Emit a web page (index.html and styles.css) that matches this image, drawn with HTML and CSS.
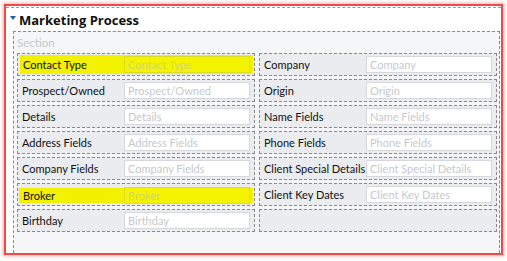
FILE: index.html
```html
<html>
  <head>
    <link rel="stylesheet" href="styles.css">
    <title>Marketing Process</title>
  </head>
  <body>
    <div class="frame">
      <div class="form">
        <h1 class="title"><span class="caret"></span>Marketing Process</h1>
        <div class="section">
          <div class="section-label">Section</div>
          <div class="grid">
            <div class="cell"><div class="field mark"><label>Contact Type</label><input placeholder="Contact Type"></div></div>
            <div class="cell"><div class="field"><label>Company</label><input placeholder="Company"></div></div>

            <div class="cell"><div class="field"><label>Prospect/Owned</label><input placeholder="Prospect/Owned"></div></div>
            <div class="cell"><div class="field"><label>Origin</label><input placeholder="Origin"></div></div>

            <div class="cell"><div class="field"><label>Details</label><input placeholder="Details"></div></div>
            <div class="cell"><div class="field"><label>Name Fields</label><input placeholder="Name Fields"></div></div>

            <div class="cell"><div class="field"><label>Address Fields</label><input placeholder="Address Fields"></div></div>
            <div class="cell"><div class="field"><label>Phone Fields</label><input placeholder="Phone Fields"></div></div>

            <div class="cell"><div class="field"><label>Company Fields</label><input placeholder="Company Fields"></div></div>
            <div class="cell"><div class="field"><label>Client Special Details</label><input placeholder="Client Special Details"></div></div>

            <div class="cell"><div class="field mark thin"><label>Broker</label><input placeholder="Broker"></div></div>
            <div class="cell"><div class="field"><label>Client Key Dates</label><input placeholder="Client Key Dates"></div></div>

            <div class="cell"><div class="field"><label>Birthday</label><input placeholder="Birthday"></div></div>
            <div class="cell"></div>
          </div>
        </div>
      </div>
    </div>
  </body>
</html>
```

FILE: styles.css
```css
body {
  margin: 0;
  background: #fff;
  font-family: "Open Sans", "Noto Sans", sans-serif;
}

.frame {
  margin: 4px;
  width: 499px;
  height: 251px;
  box-sizing: border-box;
  border: 2px solid #f04a4a;
  box-shadow: 0 0 3px 1px rgba(255, 110, 110, 0.6);
  overflow: hidden;
  background: #fff;
}

.form {
  border-top: 1px dashed #9a9a9a;
  margin-top: 1px;
}

.title {
  margin: 0;
  height: 23px;
  display: flex;
  align-items: center;
  padding-left: 4px;
  font-size: 13px;
  font-weight: bold;
  color: #111;
}

.caret {
  width: 0;
  height: 0;
  border-left: 3px solid transparent;
  border-right: 3px solid transparent;
  border-top: 4px solid #1f5fb0;
  margin-right: 3px;
  margin-top: -3px;
}

.section {
  margin: 0 1px 0 7px;
  height: 240px;
  border: 1px dashed #8a8a8a;
  background: #f5f6f8;
  padding: 0 2px 0 3px;
}

.section-label {
  height: 21px;
  line-height: 22px;
  font-family: Lato, sans-serif;
  font-size: 11.5px;
  color: #c4c6ca;
}

.grid {
  display: grid;
  grid-template-columns: 238px 238px;
  column-gap: 4px;
  row-gap: 3px;
  grid-auto-rows: 23px;
}

.cell {
  border: 1px dashed #8a8a8a;
  background: #eaecf0;
  padding: 1px;
  display: flex;
}

.field {
  flex: 1;
  display: flex;
  align-items: center;
  padding: 0 3px 0 3px;
  font-family: Lato, sans-serif;
}

.field label {
  font-size: 11px;
  color: #111;
  white-space: nowrap;
}

.field input {
  margin-left: auto;
  width: 126px;
  height: 17px;
  box-sizing: border-box;
  border: 1px solid #d6d8dc;
  background: #fff;
  padding: 0 3px;
  font-family: inherit;
  font-size: 11px;
  outline: none;
}

.field input::placeholder {
  color: #c6c9ce;
}

.mark {
  background: #f1f100;
  margin-left: 1px;
}

.mark input {
  background: #f4f400;
  border-color: #dcdc20;
}

.mark input::placeholder {
  color: #d4d470;
}

.thin {
  margin: 3px 0 1px 0;
  padding-left: 4px;
}
```
